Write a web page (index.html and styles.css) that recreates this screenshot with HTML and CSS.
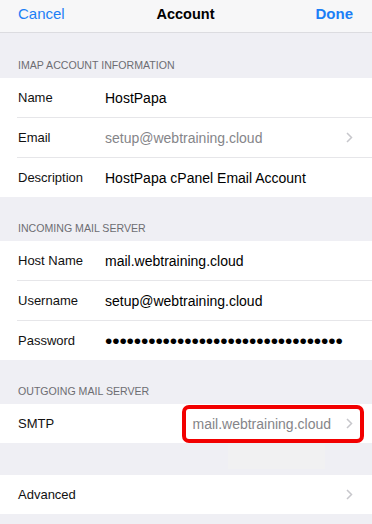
FILE: index.html
```html
<!DOCTYPE html>
<html lang="en">
<head>
    <meta charset="UTF-8">
    <meta name="viewport" content="width=device-width, initial-scale=1.0">
    <title>Account</title>
    <link rel="stylesheet" href="styles.css">
</head>
<body>

<div class="screen">
    <!-- Navigation bar -->
    <header class="nav">
        <span class="nav-btn">Cancel</span>
        <span class="nav-title">Account</span>
        <span class="nav-btn done">Done</span>
    </header>

    <!-- IMAP account -->
    <div class="group-title">IMAP ACCOUNT INFORMATION</div>
    <div class="rows">
        <div class="row">
            <span class="label">Name</span>
            <span class="value">HostPapa</span>
        </div>
        <div class="row">
            <span class="label">Email</span>
            <span class="value muted">setup@webtraining.cloud</span>
            <svg class="chevron" width="7" height="11" viewBox="0 0 7 11"><path d="M1 1l4.5 4.5L1 10" fill="none" stroke="#c7c7cc" stroke-width="1.5"/></svg>
        </div>
        <div class="row">
            <span class="label">Description</span>
            <span class="value">HostPapa cPanel Email Account</span>
        </div>
    </div>

    <!-- Incoming -->
    <div class="group-title">INCOMING MAIL SERVER</div>
    <div class="rows">
        <div class="row">
            <span class="label">Host Name</span>
            <span class="value">mail.webtraining.cloud</span>
        </div>
        <div class="row">
            <span class="label">Username</span>
            <span class="value">setup@webtraining.cloud</span>
        </div>
        <div class="row">
            <span class="label">Password</span>
            <span class="value dots">•••••••••••••••••••••••••••••••••</span>
        </div>
    </div>

    <!-- Outgoing -->
    <div class="group-title">OUTGOING MAIL SERVER</div>
    <div class="rows">
        <div class="row">
            <span class="label">SMTP</span>
            <span class="value muted right">mail.webtraining.cloud</span>
            <svg class="chevron" width="7" height="11" viewBox="0 0 7 11"><path d="M1 1l4.5 4.5L1 10" fill="none" stroke="#c7c7cc" stroke-width="1.5"/></svg>
            <div class="highlight"></div>
        </div>
    </div>

    <div class="spacer">
        <div class="smudge"></div>
    </div>

    <div class="rows">
        <div class="row">
            <span class="label">Advanced</span>
            <span class="value"></span>
            <svg class="chevron" width="7" height="11" viewBox="0 0 7 11"><path d="M1 1l4.5 4.5L1 10" fill="none" stroke="#c7c7cc" stroke-width="1.5"/></svg>
        </div>
    </div>
</div>

</body>
</html>
```

FILE: styles.css
```css
/* Basic layout */
body {
    margin: 0;
    font-family: "Liberation Sans", Arial, sans-serif;
    background-color: #efeff4;
    color: #000;
}

.screen {
    width: 372px;
    height: 524px;
    overflow: hidden;
}

/* Top navigation */
.nav {
    height: 33px;
    box-sizing: border-box;
    display: grid;
    grid-template-columns: 1fr auto 1fr;
    align-items: center;
    padding: 0 19px 5px 18px;
    background-color: #f7f7f8;
    border-bottom: 1px solid #dcdce0;
}

.nav-btn {
    font-size: 15px;
    color: #1c7ff6;
}

.nav-btn.done {
    justify-self: end;
    font-weight: bold;
}

.nav-title {
    font-size: 14.5px;
    font-weight: bold;
}

/* Section headers */
.group-title {
    height: 44px;
    box-sizing: border-box;
    display: flex;
    align-items: flex-end;
    padding: 0 18px 6px;
    font-size: 10.6px;
    line-height: 13px;
    color: #6d6d72;
}

.nav + .group-title {
    height: 45px;
}

/* Table rows */
.rows {
    background-color: #fff;
    padding-left: 17px;
}

.row {
    position: relative;
    height: 39px;
    display: flex;
    align-items: center;
    padding: 0 20px 0 1px;
}

.row + .row {
    border-top: 1px solid #e6e6e9;
}

.label {
    width: 87px;
    flex-shrink: 0;
    font-size: 13px;
    color: #111;
}

.value {
    flex: 1;
    font-size: 14px;
    white-space: nowrap;
}

.value.muted {
    color: #858589;
}

.value.right {
    text-align: right;
    margin-right: 15px;
}

.value.dots {
    font-size: 21px;
    line-height: 20px;
    letter-spacing: -0.15px;
}

.chevron {
    flex-shrink: 0;
    margin-right: -1px;
}

/* Red annotation box around the SMTP value */
.highlight {
    position: absolute;
    top: 1px;
    bottom: 0;
    right: 8px;
    width: 182px;
    box-sizing: border-box;
    border: 4px solid #f20000;
    border-radius: 7px;
}

.spacer {
    position: relative;
    height: 32px;
}

.smudge {
    position: absolute;
    left: 228px;
    top: 1px;
    width: 97px;
    height: 25px;
    background-color: #f1f1f2;
}
```
